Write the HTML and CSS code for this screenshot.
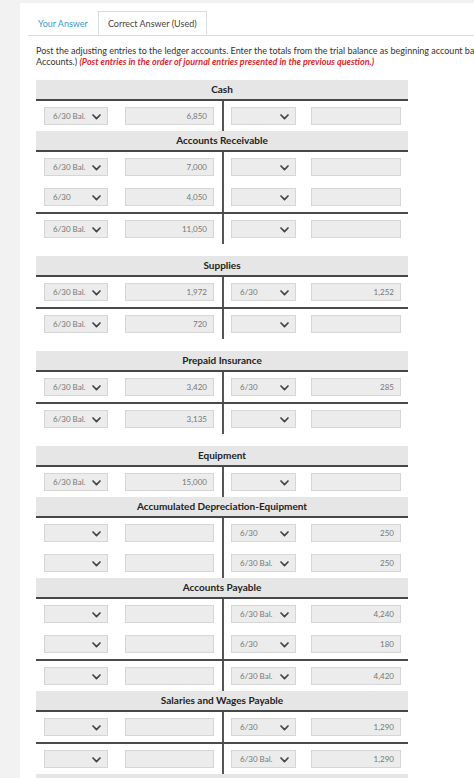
FILE: index.html
```html
<!DOCTYPE html>
<html>
<head>
<meta charset="utf-8">
<link rel="stylesheet" href="styles.css">
</head>
<body>
<div class="card">
  <div class="tabs">
    <div class="tab plain">Your Answer</div>
    <div class="tab active">Correct Answer (Used)</div>
  </div>
  <p class="intro">
    <span class="line">Post the adjusting entries to the ledger accounts. Enter the totals from the trial balance as beginning account balances.</span>
    <span class="line">Accounts.) <em class="warn">(Post entries in the order of journal entries presented in the previous question.)</em></span>
  </p>

  <div class="ledger">
    <!-- Cash -->
    <div class="acct">
      <div class="hdr">Cash</div>
      <div class="row">
        <div class="l"><div class="sel">6/30 Bal.<svg class="chev" viewBox="0 0 9 6"><polyline points="1,1 4.5,4.6 8,1"/></svg></div><div class="amt">6,850</div></div>
        <div class="dv"></div>
        <div class="r"><div class="sel"><svg class="chev" viewBox="0 0 9 6"><polyline points="1,1 4.5,4.6 8,1"/></svg></div><div class="amt"></div></div>
      </div>
    </div>

    <!-- Accounts Receivable -->
    <div class="acct gap">
      <div class="hdr">Accounts Receivable</div>
      <div class="row">
        <div class="l"><div class="sel">6/30 Bal.<svg class="chev" viewBox="0 0 9 6"><polyline points="1,1 4.5,4.6 8,1"/></svg></div><div class="amt">7,000</div></div>
        <div class="dv"></div>
        <div class="r"><div class="sel"><svg class="chev" viewBox="0 0 9 6"><polyline points="1,1 4.5,4.6 8,1"/></svg></div><div class="amt"></div></div>
      </div>
      <div class="row">
        <div class="l"><div class="sel">6/30<svg class="chev" viewBox="0 0 9 6"><polyline points="1,1 4.5,4.6 8,1"/></svg></div><div class="amt">4,050</div></div>
        <div class="dv"></div>
        <div class="r"><div class="sel"><svg class="chev" viewBox="0 0 9 6"><polyline points="1,1 4.5,4.6 8,1"/></svg></div><div class="amt"></div></div>
      </div>
      <div class="total"></div>
      <div class="row">
        <div class="l"><div class="sel">6/30 Bal.<svg class="chev" viewBox="0 0 9 6"><polyline points="1,1 4.5,4.6 8,1"/></svg></div><div class="amt">11,050</div></div>
        <div class="dv"></div>
        <div class="r"><div class="sel"><svg class="chev" viewBox="0 0 9 6"><polyline points="1,1 4.5,4.6 8,1"/></svg></div><div class="amt"></div></div>
      </div>
    </div>

    <!-- Supplies -->
    <div class="acct gap">
      <div class="hdr">Supplies</div>
      <div class="row">
        <div class="l"><div class="sel">6/30 Bal.<svg class="chev" viewBox="0 0 9 6"><polyline points="1,1 4.5,4.6 8,1"/></svg></div><div class="amt">1,972</div></div>
        <div class="dv"></div>
        <div class="r"><div class="sel">6/30<svg class="chev" viewBox="0 0 9 6"><polyline points="1,1 4.5,4.6 8,1"/></svg></div><div class="amt">1,252</div></div>
      </div>
      <div class="total"></div>
      <div class="row">
        <div class="l"><div class="sel">6/30 Bal.<svg class="chev" viewBox="0 0 9 6"><polyline points="1,1 4.5,4.6 8,1"/></svg></div><div class="amt">720</div></div>
        <div class="dv"></div>
        <div class="r"><div class="sel"><svg class="chev" viewBox="0 0 9 6"><polyline points="1,1 4.5,4.6 8,1"/></svg></div><div class="amt"></div></div>
      </div>
    </div>

    <!-- Prepaid Insurance -->
    <div class="acct gap">
      <div class="hdr">Prepaid Insurance</div>
      <div class="row">
        <div class="l"><div class="sel">6/30 Bal.<svg class="chev" viewBox="0 0 9 6"><polyline points="1,1 4.5,4.6 8,1"/></svg></div><div class="amt">3,420</div></div>
        <div class="dv"></div>
        <div class="r"><div class="sel">6/30<svg class="chev" viewBox="0 0 9 6"><polyline points="1,1 4.5,4.6 8,1"/></svg></div><div class="amt">285</div></div>
      </div>
      <div class="total"></div>
      <div class="row">
        <div class="l"><div class="sel">6/30 Bal.<svg class="chev" viewBox="0 0 9 6"><polyline points="1,1 4.5,4.6 8,1"/></svg></div><div class="amt">3,135</div></div>
        <div class="dv"></div>
        <div class="r"><div class="sel"><svg class="chev" viewBox="0 0 9 6"><polyline points="1,1 4.5,4.6 8,1"/></svg></div><div class="amt"></div></div>
      </div>
    </div>

    <!-- Equipment -->
    <div class="acct">
      <div class="hdr">Equipment</div>
      <div class="row">
        <div class="l"><div class="sel">6/30 Bal.<svg class="chev" viewBox="0 0 9 6"><polyline points="1,1 4.5,4.6 8,1"/></svg></div><div class="amt">15,000</div></div>
        <div class="dv"></div>
        <div class="r"><div class="sel"><svg class="chev" viewBox="0 0 9 6"><polyline points="1,1 4.5,4.6 8,1"/></svg></div><div class="amt"></div></div>
      </div>
    </div>

    <!-- Accumulated Depreciation-Equipment -->
    <div class="acct">
      <div class="hdr">Accumulated Depreciation-Equipment</div>
      <div class="row">
        <div class="l"><div class="sel"><svg class="chev" viewBox="0 0 9 6"><polyline points="1,1 4.5,4.6 8,1"/></svg></div><div class="amt"></div></div>
        <div class="dv"></div>
        <div class="r"><div class="sel">6/30<svg class="chev" viewBox="0 0 9 6"><polyline points="1,1 4.5,4.6 8,1"/></svg></div><div class="amt">250</div></div>
      </div>
      <div class="row">
        <div class="l"><div class="sel"><svg class="chev" viewBox="0 0 9 6"><polyline points="1,1 4.5,4.6 8,1"/></svg></div><div class="amt"></div></div>
        <div class="dv"></div>
        <div class="r"><div class="sel">6/30 Bal.<svg class="chev" viewBox="0 0 9 6"><polyline points="1,1 4.5,4.6 8,1"/></svg></div><div class="amt">250</div></div>
      </div>
    </div>

    <!-- Accounts Payable -->
    <div class="acct">
      <div class="hdr">Accounts Payable</div>
      <div class="row">
        <div class="l"><div class="sel"><svg class="chev" viewBox="0 0 9 6"><polyline points="1,1 4.5,4.6 8,1"/></svg></div><div class="amt"></div></div>
        <div class="dv"></div>
        <div class="r"><div class="sel">6/30 Bal.<svg class="chev" viewBox="0 0 9 6"><polyline points="1,1 4.5,4.6 8,1"/></svg></div><div class="amt">4,240</div></div>
      </div>
      <div class="row">
        <div class="l"><div class="sel"><svg class="chev" viewBox="0 0 9 6"><polyline points="1,1 4.5,4.6 8,1"/></svg></div><div class="amt"></div></div>
        <div class="dv"></div>
        <div class="r"><div class="sel">6/30<svg class="chev" viewBox="0 0 9 6"><polyline points="1,1 4.5,4.6 8,1"/></svg></div><div class="amt">180</div></div>
      </div>
      <div class="total"></div>
      <div class="row">
        <div class="l"><div class="sel"><svg class="chev" viewBox="0 0 9 6"><polyline points="1,1 4.5,4.6 8,1"/></svg></div><div class="amt"></div></div>
        <div class="dv"></div>
        <div class="r"><div class="sel">6/30 Bal.<svg class="chev" viewBox="0 0 9 6"><polyline points="1,1 4.5,4.6 8,1"/></svg></div><div class="amt">4,420</div></div>
      </div>
    </div>

    <!-- Salaries and Wages Payable -->
    <div class="acct">
      <div class="hdr">Salaries and Wages Payable</div>
      <div class="row">
        <div class="l"><div class="sel"><svg class="chev" viewBox="0 0 9 6"><polyline points="1,1 4.5,4.6 8,1"/></svg></div><div class="amt"></div></div>
        <div class="dv"></div>
        <div class="r"><div class="sel">6/30<svg class="chev" viewBox="0 0 9 6"><polyline points="1,1 4.5,4.6 8,1"/></svg></div><div class="amt">1,290</div></div>
      </div>
      <div class="total"></div>
      <div class="row">
        <div class="l"><div class="sel"><svg class="chev" viewBox="0 0 9 6"><polyline points="1,1 4.5,4.6 8,1"/></svg></div><div class="amt"></div></div>
        <div class="dv"></div>
        <div class="r"><div class="sel">6/30 Bal.<svg class="chev" viewBox="0 0 9 6"><polyline points="1,1 4.5,4.6 8,1"/></svg></div><div class="amt">1,290</div></div>
      </div>
    </div>

    <div class="acct">
      <div class="hdr"></div>
    </div>
  </div>
</div>
</body>
</html>
```

FILE: styles.css
```css
html, body {
  margin: 0;
  padding: 0;
}
body {
  background: #f2f2f2;
  font-family: Lato, "Open Sans", Arial, sans-serif;
  color: #333;
  overflow: hidden;
  height: 778px;
}
.card {
  margin: 3px 0 0 20px;
  background: #fff;
  height: 775px;
  overflow: hidden;
}
.tabs {
  display: flex;
  margin-left: 8px;
  padding-top: 8px;
  border-bottom: 1px solid #dcdcdc;
}
.tab {
  height: 23px;
  line-height: 23px;
  font-size: 9px;
  box-sizing: border-box;
  white-space: nowrap;
}
.tab.plain {
  color: #3b9ad5;
  padding: 0 10px;
  height: 23px;
  margin-top: 1px;
}
.tab.active {
  color: #444;
  border: 1px solid #dcdcdc;
  border-bottom: 1px solid #fff;
  margin-bottom: -1px;
  height: 24px;
  background: #fff;
  padding: 0 9px;
}
.intro {
  margin: 9px 0 0 16px;
  font-size: 9px;
  line-height: 11px;
  color: #333;
  white-space: nowrap;
}
.line {
  display: block;
}
.warn {
  color: #e2262c;
  font-weight: bold;
  font-style: italic;
}
.ledger {
  margin: 13px 0 0 16px;
  width: 372px;
}
.acct.gap {
  margin-bottom: 12px;
}
.hdr {
  height: 19px;
  line-height: 19px;
  background: #e6e6e6;
  border-bottom: 2px solid #474747;
  text-align: center;
  font-weight: bold;
  font-size: 10px;
  color: #222;
}
.row {
  display: flex;
  height: 30px;
}
.l, .r {
  display: flex;
  justify-content: space-between;
  align-items: center;
  box-sizing: border-box;
}
.l {
  width: 186px;
  padding: 0 8px;
}
.r {
  width: 184px;
  padding: 0 7px;
}
.l .sel { width: 64px; }
.l .amt { width: 89px; }
.r .sel { width: 65px; }
.r .amt { width: 90px; }
.dv {
  width: 2px;
  background: #555;
}
.total {
  height: 2px;
  background: #4a4a4a;
}
.sel, .amt {
  height: 18px;
  box-sizing: border-box;
  border: 1px solid #d6d6d6;
  background: #ececec;
  font-size: 8px;
  color: #777;
  line-height: 16px;
  white-space: nowrap;
}
.sel {
  position: relative;
  padding-left: 8px;
}
.amt {
  text-align: right;
  padding-right: 6px;
}
.chev {
  position: absolute;
  right: 6px;
  top: 6px;
  width: 9px;
  height: 6px;
  fill: none;
  stroke: #454545;
  stroke-width: 1.7;
  stroke-linecap: round;
  stroke-linejoin: round;
}
```
